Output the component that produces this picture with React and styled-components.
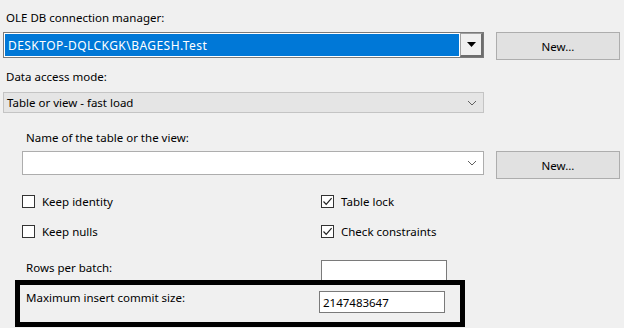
import React from "react";
import styled, { createGlobalStyle } from "styled-components";

const Global = createGlobalStyle`
  html, body { margin: 0; padding: 0; background: #f0f0f0; }
  body { font-family: "Noto Sans", "Open Sans", sans-serif; font-size: 11.5px; color: #000; }
`;

const Page = styled.div`
  width: 624px;
  height: 328px;
  overflow: hidden;
  background: #f0f0f0;
  box-sizing: border-box;
`;

const Label = styled.div`
  height: 16px;
  line-height: 16px;
  padding-left: ${(p) => p.$indent ?? 6}px;
  margin-top: ${(p) => p.$top ?? 0}px;
  margin-bottom: ${(p) => p.$bottom ?? 0}px;
  white-space: nowrap;
`;

const Row = styled.div`
  display: flex;
  align-items: flex-start;
  margin-top: ${(p) => p.$top ?? 0}px;
`;

const Combo = styled.div`
  box-sizing: border-box;
  width: ${(p) => p.$w}px;
  height: ${(p) => p.$h}px;
  border: 1px solid ${(p) => p.$border || "#7a7a7a"};
  background: ${(p) => p.$bg || "#fff"};
  display: flex;
  align-items: stretch;
  padding: ${(p) => p.$pad ?? 0}px;
  margin-left: ${(p) => p.$left ?? 0}px;
`;

const Selected = styled.div`
  flex: 1;
  background: #0078d7;
  color: #fff;
  display: flex;
  align-items: center;
  padding-left: 3px;
  font-size: 12px;
  letter-spacing: 0.45px;
  white-space: nowrap;
`;

const ComboText = styled.div`
  flex: 1;
  display: flex;
  align-items: center;
  padding-left: 3px;
  white-space: nowrap;
`;

const DropButton = styled.div`
  width: 23px;
  margin: -1px -1px -1px 1px;
  box-sizing: border-box;
  background: #f0f0f0;
  border-top: 1px solid #a0a0a0;
  border-left: 1px solid #a0a0a0;
  border-right: 2px solid #6d6d6d;
  border-bottom: 2px solid #6d6d6d;
  display: flex;
  align-items: center;
  justify-content: center;
`;

const Chevron = styled.div`
  width: 22px;
  display: flex;
  align-items: center;
  justify-content: center;
`;

const Button = styled.div`
  box-sizing: border-box;
  width: 124px;
  height: 28px;
  margin-left: ${(p) => p.$left ?? 12}px;
  background: #e1e1e1;
  border: 1px solid #adadad;
  display: flex;
  align-items: center;
  justify-content: center;
`;

const Section = styled.div`
  padding-left: 22px;
`;

const CheckGrid = styled.div`
  display: grid;
  grid-template-columns: 299px 200px;
  row-gap: 14px;
  margin-top: 14px;
`;

const CheckItem = styled.div`
  display: flex;
  align-items: center;
  height: 16px;
  white-space: nowrap;
`;

const Box = styled.div`
  box-sizing: border-box;
  width: 13px;
  height: 13px;
  border: 1px solid #333;
  background: #fff;
  margin-right: 7px;
  display: flex;
  align-items: center;
  justify-content: center;
`;

const FieldRow = styled.div`
  display: grid;
  grid-template-columns: ${(p) => p.$col}px 126px;
  align-items: start;
  margin-top: ${(p) => p.$top ?? 0}px;
`;

const FieldLabel = styled.div`
  line-height: 16px;
  padding-left: 4px;
  margin-top: ${(p) => p.$offset ?? 0}px;
  white-space: nowrap;
`;

const TextBox = styled.div`
  box-sizing: border-box;
  width: 126px;
  height: 22px;
  background: #fff;
  border: 1px solid #7a7a7a;
  display: flex;
  align-items: center;
  padding-left: 3px;
  white-space: nowrap;
`;

const Highlight = styled.div`
  position: relative;
  box-sizing: border-box;
  width: 450px;
  height: 47px;
  margin-top: -2px;
  margin-left: -7px;
  border: 5px solid #000;
  background: #f0f0f0;
  padding: 6px 0 0 2px;
`;

const Check = () => (
  <svg width="11" height="11" viewBox="0 0 11 11">
    <path d="M1.5 5.5 L4.2 8.3 L9.6 2.2" fill="none" stroke="#222" strokeWidth="1.2" />
  </svg>
);

const ChevronIcon = ({ color = "#606060" }) => (
  <svg width="10" height="6" viewBox="0 0 10 6">
    <path d="M1 1 L5 5 L9 1" fill="none" stroke={color} strokeWidth="1" />
  </svg>
);

export default function App() {
  return (
    <Page>
      <Global />
      <Label $top={10} $bottom={6}>OLE DB connection manager:</Label>
      <Row>
        <Combo $w={481} $h={26} $pad={1} $left={3}>
          <Selected>DESKTOP-DQLCKGK\BAGESH.Test</Selected>
          <DropButton>
            <svg width="9" height="5" viewBox="0 0 9 5">
              <path d="M0 0 L9 0 L4.5 5 Z" fill="#000" />
            </svg>
          </DropButton>
        </Combo>
        <Button $left={12}>New...</Button>
      </Row>
      <Label $top={9} $bottom={7}>Data access mode:</Label>
      <Combo $w={481} $h={21} $left={3} $bg="#e5e5e5" $border="#c4c4c4">
        <ComboText>Table or view - fast load</ComboText>
        <Chevron><ChevronIcon /></Chevron>
      </Combo>
      <Section>
        <Label $indent={4} $top={17} $bottom={5}>Name of the table or the view:</Label>
        <Row>
          <Combo $w={462} $h={24} $border="#adadad">
            <ComboText />
            <Chevron><ChevronIcon /></Chevron>
          </Combo>
          <Button $left={12}>New...</Button>
        </Row>
        <CheckGrid>
          <CheckItem><Box />Keep identity</CheckItem>
          <CheckItem><Box><Check /></Box>Table lock</CheckItem>
          <CheckItem><Box />Keep nulls</CheckItem>
          <CheckItem><Box><Check /></Box>Check constraints</CheckItem>
        </CheckGrid>
        <FieldRow $col={299} $top={21}>
          <FieldLabel>Rows per batch:</FieldLabel>
          <TextBox />
        </FieldRow>
        <Highlight>
          <FieldRow $col={297}>
            <FieldLabel $offset={-1}>Maximum insert commit size:</FieldLabel>
            <TextBox>2147483647</TextBox>
          </FieldRow>
        </Highlight>
      </Section>
    </Page>
  );
}
